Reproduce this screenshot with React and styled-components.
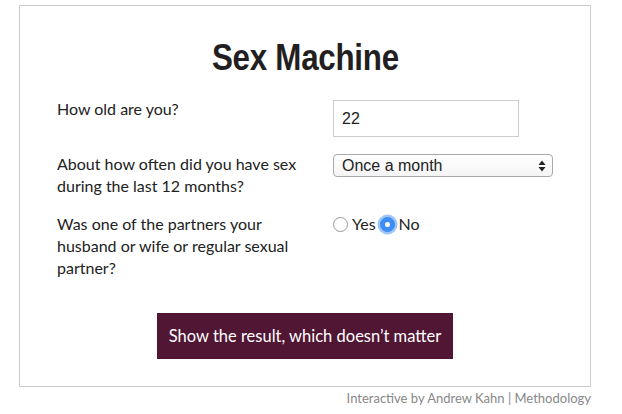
import React, { useState } from 'react'
import styled, { createGlobalStyle } from 'styled-components'

const GlobalStyle = createGlobalStyle`
  html, body {
    margin: 0;
    padding: 0;
    background: #ffffff;
  }
  body {
    font-family: Lato, "Open Sans", sans-serif;
    color: #222222;
  }
`

const Page = styled.div`
  width: 572px;
  margin: 5px 0 0 19px;
`

const Card = styled.form`
  box-sizing: border-box;
  width: 572px;
  border: 1px solid #cccccc;
  padding: 0 37px 27px 37px;
  display: flex;
  flex-direction: column;
  align-items: stretch;
`

const Title = styled.h1`
  margin: 30px 0 0 0;
  height: 62px;
  display: flex;
  justify-content: center;
  font-family: "Liberation Sans", Arial, sans-serif;
  font-weight: 700;
  font-size: 36px;
  line-height: 44px;
  color: #231f20;
`

// no narrow face is installed, so squeeze the regular bold one
const TitleText = styled.span`
  display: inline-block;
  transform: scaleX(0.87);
  letter-spacing: -0.3px;
`

const Questions = styled.div`
  display: flex;
  flex-direction: column;
  gap: 16px;
`

const Row = styled.div`
  display: grid;
  grid-template-columns: 276px 1fr;
  align-items: start;
`

const Label = styled.label`
  font-size: 16px;
  line-height: 22px;
  color: #222222;
  padding-right: 20px;
`

const TextInput = styled.input`
  box-sizing: border-box;
  width: 186px;
  height: 37px;
  margin-top: 2px;
  border: 1px solid #cccccc;
  border-radius: 0;
  padding: 0 8px;
  font-family: "Liberation Sans", Arial, sans-serif;
  font-size: 16px;
  color: #222222;
  outline: none;
`

const SelectWrap = styled.div`
  position: relative;
  width: 220px;
  margin-top: 1px;
`

const Select = styled.select`
  box-sizing: border-box;
  appearance: none;
  -webkit-appearance: none;
  width: 220px;
  height: 23px;
  border: 1px solid #a9a9a9;
  border-radius: 4px;
  background: linear-gradient(#ffffff, #f4f4f4);
  padding: 0 24px 0 8px;
  font-family: "Liberation Sans", Arial, sans-serif;
  font-size: 16px;
  color: #222222;
  outline: none;
`

const Arrows = styled.svg`
  position: absolute;
  right: 7px;
  top: 6px;
  pointer-events: none;
`

const Radios = styled.div`
  display: flex;
  align-items: center;
  height: 22px;
`

const RadioLabel = styled.label`
  display: flex;
  align-items: center;
  font-size: 16px;
  line-height: 22px;
  color: #222222;
  margin-right: 4px;
`

const Radio = styled.input`
  appearance: none;
  -webkit-appearance: none;
  box-sizing: border-box;
  width: 15px;
  height: 15px;
  margin: 0 4px 0 0;
  border-radius: 50%;
  border: 1px solid ${p => (p.checked ? '#3b8cf0' : '#9a9a9a')};
  background: ${p => (p.checked ? '#3d8df5' : '#ffffff')};
  box-shadow: ${p => (p.checked ? '0 0 0 2.5px rgba(80, 150, 245, 0.55)' : 'none')};
  position: relative;
  &:checked::after {
    content: '';
    position: absolute;
    left: 4px;
    top: 4px;
    width: 5px;
    height: 5px;
    border-radius: 50%;
    background: #ffffff;
  }
`

const Actions = styled.div`
  display: flex;
  justify-content: center;
  margin-top: 34px;
`

const SubmitButton = styled.button`
  height: 46px;
  padding: 0 12px;
  border: none;
  border-radius: 0;
  background: #511634;
  color: #ffffff;
  font-family: Lato, "Open Sans", sans-serif;
  font-size: 16.5px;
  cursor: pointer;
`

const Credit = styled.div`
  text-align: right;
  font-size: 13px;
  line-height: 22px;
  color: #888888;
`

const App = () => {
  const [age, setAge] = useState('22')
  const [often, setOften] = useState('month')
  const [partner, setPartner] = useState('no')

  return (
    <Page>
      <GlobalStyle />
      <Card onSubmit={e => e.preventDefault()}>
        <Title><TitleText>Sex Machine</TitleText></Title>
        <Questions>
          <Row>
            <Label htmlFor="age">How old are you?</Label>
            <TextInput id="age" value={age} onChange={e => setAge(e.target.value)} />
          </Row>
          <Row>
            <Label htmlFor="often">About how often did you have sex during the last 12 months?</Label>
            <SelectWrap>
              <Select id="often" value={often} onChange={e => setOften(e.target.value)}>
                <option value="never">Not at all</option>
                <option value="once">Once or twice</option>
                <option value="month">Once a month</option>
                <option value="2-3">2 or 3 times a month</option>
                <option value="week">Once a week</option>
              </Select>
              <Arrows width="8" height="12" viewBox="0 0 8 12">
                <path d="M4 0.5 L7.5 5 L0.5 5 Z" fill="#222" />
                <path d="M4 11.5 L7.5 7 L0.5 7 Z" fill="#222" />
              </Arrows>
            </SelectWrap>
          </Row>
          <Row>
            <Label>Was one of the partners your husband or wife or regular sexual partner?</Label>
            <Radios>
              <RadioLabel>
                <Radio type="radio" name="partner" checked={partner === 'yes'} onChange={() => setPartner('yes')} />
                Yes
              </RadioLabel>
              <RadioLabel>
                <Radio type="radio" name="partner" checked={partner === 'no'} onChange={() => setPartner('no')} />
                No
              </RadioLabel>
            </Radios>
          </Row>
        </Questions>
        <Actions>
          <SubmitButton type="submit">Show the result, which doesn’t matter</SubmitButton>
        </Actions>
      </Card>
      <Credit>Interactive by Andrew Kahn | Methodology</Credit>
    </Page>
  )
}

export default App
